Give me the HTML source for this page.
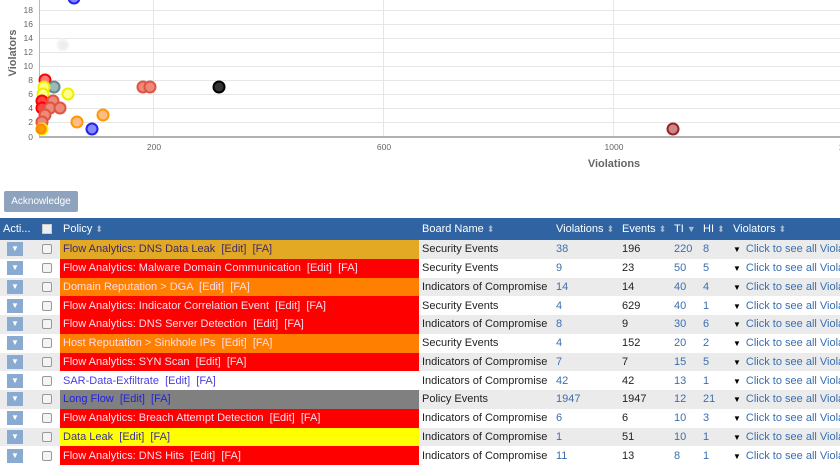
<!DOCTYPE html>
<html><head><meta charset="utf-8"><style>
*{margin:0;padding:0;box-sizing:border-box}
body{width:840px;height:457px;overflow:hidden;background:#fff;font-family:"Liberation Sans",sans-serif;font-size:11px;position:relative}
svg{position:absolute;left:0;top:0}
.btn{position:absolute;left:4px;top:191px;width:74px;height:21px;background:#8ea3bd;border-radius:2px;color:#fff;font-size:10px;line-height:21px;text-align:center}
table{position:absolute;left:0;top:218px;border-collapse:collapse;table-layout:fixed;width:860px}
th{background:#2f63a2;color:#fff;font-weight:normal;text-align:left;height:22px;padding-left:3px;white-space:nowrap;overflow:hidden;font-size:11px}
td{height:18.75px;padding-left:3px;white-space:nowrap;overflow:hidden;color:#222}
tr.g td{background:#ebebeb}
.a{padding-left:7px}
.a span{display:inline-block;width:16px;height:14px;background:#8aabd1;color:#fff;font-size:8px;text-align:center;line-height:14px;vertical-align:middle}
.c span{display:inline-block;width:10px;height:10px;border:1px solid #999;border-radius:2px;background:#f4f4f4;vertical-align:middle;margin-left:6px}
.n{color:#3a6fb0}
.s{color:#aab8cc;font-size:9px}
.v{color:#3a6fb0}
.v b{color:#000;font-size:8px;margin-right:5px}
</style></head><body>
<svg width="840" height="190">
<g stroke="#e6e6e6" stroke-width="1">
<line x1="39" y1="-4.5" x2="840" y2="-4.5"/>
<line x1="39" y1="10.5" x2="840" y2="10.5"/><line x1="39" y1="24.5" x2="840" y2="24.5"/><line x1="39" y1="38.5" x2="840" y2="38.5"/><line x1="39" y1="52.5" x2="840" y2="52.5"/><line x1="39" y1="66.5" x2="840" y2="66.5"/><line x1="39" y1="80.5" x2="840" y2="80.5"/><line x1="39" y1="94.5" x2="840" y2="94.5"/><line x1="39" y1="108.5" x2="840" y2="108.5"/><line x1="39" y1="122.5" x2="840" y2="122.5"/>
<line x1="153.5" y1="0" x2="153.5" y2="137"/><line x1="383.5" y1="0" x2="383.5" y2="137"/><line x1="613.5" y1="0" x2="613.5" y2="137"/>
</g>
<line x1="39" y1="137" x2="840" y2="137" stroke="#999" stroke-width="1.5"/>
<line x1="39.5" y1="0" x2="39.5" y2="137" stroke="#bbb"/>
<g font-family="Liberation Sans" font-size="8.5" fill="#666" text-anchor="end">
<text x="33" y="13">18</text><text x="33" y="27">16</text><text x="33" y="41">14</text><text x="33" y="55">12</text><text x="33" y="69">10</text><text x="33" y="83">8</text><text x="33" y="97">6</text><text x="33" y="111">4</text><text x="33" y="125">2</text><text x="33" y="140">0</text>
</g>
<g font-family="Liberation Sans" font-size="8.5" fill="#666" text-anchor="middle">
<text x="154" y="150">200</text><text x="384" y="150">600</text><text x="614" y="150">1000</text><text x="841" y="150">1</text>
</g>
<text x="614" y="167" font-family="Liberation Sans" font-size="11" font-weight="bold" fill="#666" text-anchor="middle">Violations</text>
<text transform="translate(16,53) rotate(-90)" font-family="Liberation Sans" font-size="11" font-weight="bold" fill="#666" text-anchor="middle">Violators</text>
<g stroke-width="2">
<circle cx="74" cy="-2" r="5.5" fill="#8888ff" stroke="#2222ee"/>
<circle cx="63" cy="45" r="5.5" fill="#eee" stroke="#f6f6f6"/>
<circle cx="45" cy="80" r="5.5" fill="#f77" stroke="#f00"/>
<circle cx="54" cy="87" r="5.5" fill="#9bb" stroke="#688"/>
<circle cx="44" cy="87" r="5.5" fill="#ff8" stroke="#ee0"/>
<circle cx="43" cy="94" r="5.5" fill="#ff8" stroke="#ee0"/>
<circle cx="68" cy="94" r="5.5" fill="#ff8" stroke="#ee0"/>
<circle cx="42" cy="101" r="5.5" fill="#f44" stroke="#f00"/>
<circle cx="53" cy="101" r="5.5" fill="#e87" stroke="#d54"/>
<circle cx="42" cy="108" r="5.5" fill="#f44" stroke="#f00"/>
<circle cx="50" cy="108" r="5.5" fill="#e87" stroke="#d54"/>
<circle cx="60" cy="108" r="5.5" fill="#e87" stroke="#d54"/>
<circle cx="45" cy="115" r="5.5" fill="#e87" stroke="#d54"/>
<circle cx="42" cy="122" r="5.5" fill="#e87" stroke="#d54"/>
<circle cx="77" cy="122" r="5.5" fill="#fb8" stroke="#f90"/>
<circle cx="103" cy="115" r="5.5" fill="#fb8" stroke="#f90"/>
<circle cx="92" cy="129" r="5.5" fill="#88f" stroke="#22e"/>
<circle cx="42" cy="129" r="5.5" fill="#ff8" stroke="#ee0"/>
<circle cx="41" cy="129" r="4.5" fill="#f90" stroke="#f80"/>
<circle cx="143" cy="87" r="5.5" fill="#e87" stroke="#d54"/>
<circle cx="150" cy="87" r="5.5" fill="#e87" stroke="#d54"/>
<circle cx="219" cy="87" r="5.5" fill="#333" stroke="#000"/>
<circle cx="673" cy="129" r="5.5" fill="#c88" stroke="#922"/>
</g>
</svg>
<div class="btn">Acknowledge</div>
<table>
<colgroup><col style="width:33px"><col style="width:27px"><col style="width:359px"><col style="width:134px"><col style="width:66px"><col style="width:52px"><col style="width:29px"><col style="width:30px"><col style="width:130px"></colgroup>
<tr><th>Acti...</th><th><span style="display:inline-block;width:10px;height:10px;background:#eee;border:1px solid #ccc;margin-left:6px;vertical-align:middle"></span></th><th>Policy <span class="s">⬍</span></th><th>Board Name <span class="s">⬍</span></th><th>Violations <span class="s">⬍</span></th><th>Events <span class="s">⬍</span></th><th>TI <span class="s">▼</span></th><th>HI <span class="s">⬍</span></th><th>Violators <span class="s">⬍</span></th></tr>
<tr class="g"><td class="a"><span>▼</span></td><td class="c"><span></span></td><td style="background:#e3a925;color:#3b2a6a">Flow Analytics: DNS Data Leak &nbsp;[Edit] &nbsp;[FA]</td><td>Security Events</td><td class="n">38</td><td>196</td><td class="n">220</td><td class="n">8</td><td class="v"><b>▼</b>Click to see all Violators</td></tr>
<tr><td class="a"><span>▼</span></td><td class="c"><span></span></td><td style="background:#ff0000;color:#fde">Flow Analytics: Malware Domain Communication &nbsp;[Edit] &nbsp;[FA]</td><td>Security Events</td><td class="n">9</td><td>23</td><td class="n">50</td><td class="n">5</td><td class="v"><b>▼</b>Click to see all Violators</td></tr>
<tr class="g"><td class="a"><span>▼</span></td><td class="c"><span></span></td><td style="background:#ff8000;color:#fde">Domain Reputation &gt; DGA &nbsp;[Edit] &nbsp;[FA]</td><td>Indicators of Compromise</td><td class="n">14</td><td>14</td><td class="n">40</td><td class="n">4</td><td class="v"><b>▼</b>Click to see all Violators</td></tr>
<tr><td class="a"><span>▼</span></td><td class="c"><span></span></td><td style="background:#ff0000;color:#fde">Flow Analytics: Indicator Correlation Event &nbsp;[Edit] &nbsp;[FA]</td><td>Security Events</td><td class="n">4</td><td>629</td><td class="n">40</td><td class="n">1</td><td class="v"><b>▼</b>Click to see all Violators</td></tr>
<tr class="g"><td class="a"><span>▼</span></td><td class="c"><span></span></td><td style="background:#ff0000;color:#fde">Flow Analytics: DNS Server Detection &nbsp;[Edit] &nbsp;[FA]</td><td>Indicators of Compromise</td><td class="n">8</td><td>9</td><td class="n">30</td><td class="n">6</td><td class="v"><b>▼</b>Click to see all Violators</td></tr>
<tr><td class="a"><span>▼</span></td><td class="c"><span></span></td><td style="background:#ff8000;color:#fde">Host Reputation &gt; Sinkhole IPs &nbsp;[Edit] &nbsp;[FA]</td><td>Security Events</td><td class="n">4</td><td>152</td><td class="n">20</td><td class="n">2</td><td class="v"><b>▼</b>Click to see all Violators</td></tr>
<tr class="g"><td class="a"><span>▼</span></td><td class="c"><span></span></td><td style="background:#ff0000;color:#fde">Flow Analytics: SYN Scan &nbsp;[Edit] &nbsp;[FA]</td><td>Indicators of Compromise</td><td class="n">7</td><td>7</td><td class="n">15</td><td class="n">5</td><td class="v"><b>▼</b>Click to see all Violators</td></tr>
<tr><td class="a"><span>▼</span></td><td class="c"><span></span></td><td style="background:#fff;color:#4a3fe0">SAR-Data-Exfiltrate &nbsp;[Edit] &nbsp;[FA]</td><td>Indicators of Compromise</td><td class="n">42</td><td>42</td><td class="n">13</td><td class="n">1</td><td class="v"><b>▼</b>Click to see all Violators</td></tr>
<tr class="g"><td class="a"><span>▼</span></td><td class="c"><span></span></td><td style="background:#808080;color:#2222dd">Long Flow &nbsp;[Edit] &nbsp;[FA]</td><td>Policy Events</td><td class="n">1947</td><td>1947</td><td class="n">12</td><td class="n">21</td><td class="v"><b>▼</b>Click to see all Violators</td></tr>
<tr><td class="a"><span>▼</span></td><td class="c"><span></span></td><td style="background:#ff0000;color:#fde">Flow Analytics: Breach Attempt Detection &nbsp;[Edit] &nbsp;[FA]</td><td>Indicators of Compromise</td><td class="n">6</td><td>6</td><td class="n">10</td><td class="n">3</td><td class="v"><b>▼</b>Click to see all Violators</td></tr>
<tr class="g"><td class="a"><span>▼</span></td><td class="c"><span></span></td><td style="background:#ffff00;color:#3a2fa0">Data Leak &nbsp;[Edit] &nbsp;[FA]</td><td>Indicators of Compromise</td><td class="n">1</td><td>51</td><td class="n">10</td><td class="n">1</td><td class="v"><b>▼</b>Click to see all Violators</td></tr>
<tr><td class="a"><span>▼</span></td><td class="c"><span></span></td><td style="background:#ff0000;color:#fde">Flow Analytics: DNS Hits &nbsp;[Edit] &nbsp;[FA]</td><td>Indicators of Compromise</td><td class="n">11</td><td>13</td><td class="n">8</td><td class="n">1</td><td class="v"><b>▼</b>Click to see all Violators</td></tr>
</table>
</body></html>
